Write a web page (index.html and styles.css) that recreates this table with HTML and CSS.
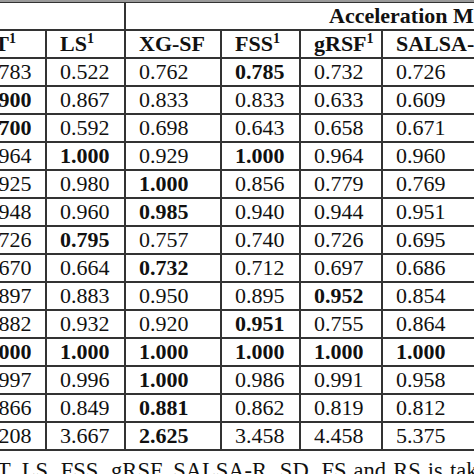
FILE: index.html
```html
<!DOCTYPE html>
<html>
<head>
<meta charset="utf-8">
<link rel="stylesheet" href="styles.css">
</head>
<body>
<div class="page">
  <table class="results">
    <colgroup>
      <col class="c-t"><col class="c-ls"><col class="c-xg"><col class="c-fss"><col class="c-grsf"><col class="c-salsa"><col class="c-sd">
    </colgroup>
    <thead>
      <tr class="group-row">
        <th colspan="2" class="blank"></th>
        <th colspan="5" class="group">Acceleration Methods</th>
      </tr>
      <tr class="head-row">
        <th>ST<sup>1</sup></th>
        <th>LS<sup>1</sup></th>
        <th>XG-SF</th>
        <th>FSS<sup>1</sup></th>
        <th>gRSF<sup>1</sup></th>
        <th>SALSA-R</th>
        <th>SD</th>
      </tr>
    </thead>
    <tbody>
      <tr><td>0.783</td><td>0.522</td><td>0.762</td><td class="b">0.785</td><td>0.732</td><td>0.726</td><td>0.700</td></tr>
      <tr><td class="b">0.900</td><td>0.867</td><td>0.833</td><td>0.833</td><td>0.633</td><td>0.609</td><td>0.800</td></tr>
      <tr><td class="b">0.700</td><td>0.592</td><td>0.698</td><td>0.643</td><td>0.658</td><td>0.671</td><td>0.650</td></tr>
      <tr><td>0.964</td><td class="b">1.000</td><td>0.929</td><td class="b">1.000</td><td>0.964</td><td>0.960</td><td>0.950</td></tr>
      <tr><td>0.925</td><td>0.980</td><td class="b">1.000</td><td>0.856</td><td>0.779</td><td>0.769</td><td>0.900</td></tr>
      <tr><td>0.948</td><td>0.960</td><td class="b">0.985</td><td>0.940</td><td>0.944</td><td>0.951</td><td>0.930</td></tr>
      <tr><td>0.726</td><td class="b">0.795</td><td>0.757</td><td>0.740</td><td>0.726</td><td>0.695</td><td>0.710</td></tr>
      <tr><td>0.670</td><td>0.664</td><td class="b">0.732</td><td>0.712</td><td>0.697</td><td>0.686</td><td>0.690</td></tr>
      <tr><td>0.897</td><td>0.883</td><td>0.950</td><td>0.895</td><td class="b">0.952</td><td>0.854</td><td>0.880</td></tr>
      <tr><td>0.882</td><td>0.932</td><td>0.920</td><td class="b">0.951</td><td>0.755</td><td>0.864</td><td>0.900</td></tr>
      <tr><td class="b">1.000</td><td class="b">1.000</td><td class="b">1.000</td><td class="b">1.000</td><td class="b">1.000</td><td class="b">1.000</td><td class="b">1.000</td></tr>
      <tr><td>0.997</td><td>0.996</td><td class="b">1.000</td><td>0.986</td><td>0.991</td><td>0.958</td><td>0.980</td></tr>
      <tr><td>0.866</td><td>0.849</td><td class="b">0.881</td><td>0.862</td><td>0.819</td><td>0.812</td><td>0.840</td></tr>
      <tr><td>3.208</td><td>3.667</td><td class="b">2.625</td><td>3.458</td><td>4.458</td><td>5.375</td><td>4.000</td></tr>
    </tbody>
  </table>
  <p class="caption">T, LS, FSS, gRSF, SALSA-R, SD, FS and RS is taken from the literature.</p>
</div>
</body>
</html>
```
FILE: styles.css
```css
html, body {
  margin: 0;
  padding: 0;
  background: #fff;
  overflow: hidden;
}
.page {
  width: 474px;
  height: 474px;
  overflow: hidden;
  border-top: 2px solid #9a9a9a;
  box-sizing: border-box;
  font-family: "Liberation Serif", "Times New Roman", serif;
  color: #111;
}
.results {
  margin-left: -33px;
  border-collapse: collapse;
  table-layout: fixed;
  width: 620px;
  font-size: 22px;
}
.c-t { width: 78px; }
.c-ls { width: 79px; }
.c-xg { width: 96px; }
.c-fss { width: 79px; }
.c-grsf { width: 82px; }
.c-salsa { width: 100px; }
.c-sd { width: 106px; }
.results th,
.results td {
  border: 2px solid #333;
  padding: 0 0 0 13px;
  text-align: left;
  white-space: nowrap;
  overflow: hidden;
  height: 26px;
  line-height: 26px;
}
.results th {
  font-weight: bold;
}
.results thead tr:first-child th {
  border-top: 1px solid #333;
}
.group-row th {
  height: 25px;
}
.group {
  padding-left: 203px !important;
}
.results sup {
  font-size: 14px;
  line-height: 0;
  vertical-align: 8px;
}
.b {
  font-weight: bold;
}
.caption {
  margin: 7px 0 0 -3px;
  font-size: 22.5px;
  line-height: 26px;
  word-spacing: 1.5px;
  white-space: nowrap;
}
```
